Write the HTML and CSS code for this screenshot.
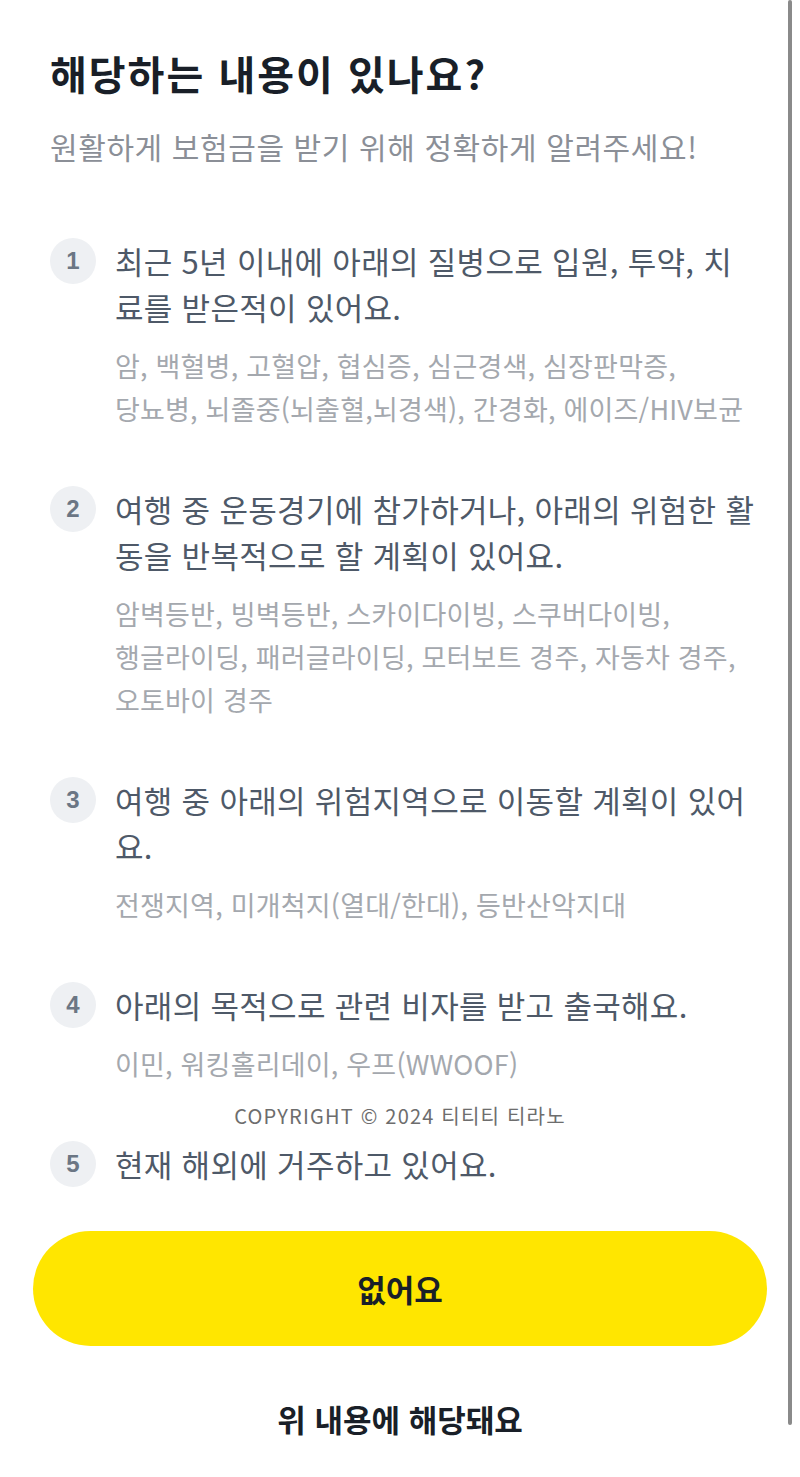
FILE: index.html
```html
<!DOCTYPE html>
<html lang="ko">
<head>
    <meta charset="UTF-8">
    <meta name="viewport" content="width=device-width, initial-scale=1.0">
    <title>해당하는 내용이 있나요?</title>
    <link rel="stylesheet" href="styles.css">
</head>
<body>
    <div class="page">
        <!-- 헤더 -->
        <h1 class="title">해당하는 내용이 있나요?</h1>
        <p class="subtitle">원활하게 보험금을 받기 위해 정확하게 알려주세요!</p>

        <!-- 질문 목록 -->
        <ol class="question-list">
            <li class="question">
                <span class="question-num">1</span>
                <div class="question-body">
                    <div class="question-text">최근 5년 이내에 아래의 질병으로 입원, 투약, 치료를 받은적이 있어요.</div>
                    <div class="question-desc">암, 백혈병, 고혈압, 협심증, 심근경색, 심장판막증, 당뇨병, 뇌졸중(뇌출혈,뇌경색), 간경화, 에이즈/HIV보균</div>
                </div>
            </li>
            <li class="question">
                <span class="question-num">2</span>
                <div class="question-body">
                    <div class="question-text">여행 중 운동경기에 참가하거나, 아래의 위험한 활동을 반복적으로 할 계획이 있어요.</div>
                    <div class="question-desc">암벽등반, 빙벽등반, 스카이다이빙, 스쿠버다이빙, 행글라이딩, 패러글라이딩, 모터보트 경주, 자동차 경주, 오토바이 경주</div>
                </div>
            </li>
            <li class="question">
                <span class="question-num">3</span>
                <div class="question-body">
                    <div class="question-text">여행 중 아래의 위험지역으로 이동할 계획이 있어요.</div>
                    <div class="question-desc">전쟁지역, 미개척지(열대/한대), 등반산악지대</div>
                </div>
            </li>
            <li class="question">
                <span class="question-num">4</span>
                <div class="question-body">
                    <div class="question-text">아래의 목적으로 관련 비자를 받고 출국해요.</div>
                    <div class="question-desc">이민, 워킹홀리데이, 우프(WWOOF)</div>
                </div>
            </li>
            <li class="question">
                <span class="question-num">5</span>
                <div class="question-body">
                    <div class="question-text">현재 해외에 거주하고 있어요.</div>
                </div>
            </li>
        </ol>

        <!-- 하단 버튼 -->
        <div class="actions">
            <button class="btn btn-primary">없어요</button>
            <button class="btn btn-text">위 내용에 해당돼요</button>
        </div>

        <!-- 워터마크 -->
        <div class="watermark">COPYRIGHT © 2024 티티티 티라노</div>
    </div>

    <div class="scrollbar"></div>
</body>
</html>
```

FILE: styles.css
```css
/* 기본 */
body {
    margin: 0;
    background: #fff;
    font-family: 'Noto Sans CJK KR', 'Noto Sans', sans-serif;
}

.page {
    position: relative;
    padding: 48px 42px 0 50px;
}

/* 헤더 */
.title {
    margin: 0;
    font-size: 40px;
    line-height: 50px;
    font-weight: 700;
    color: #191f28;
    letter-spacing: 2px;
}

.subtitle {
    margin: 28px 0 0;
    font-size: 30px;
    line-height: 40px;
    color: #8b8f97;
    letter-spacing: 0.6px;
}

/* 질문 목록 */
.question-list {
    list-style: none;
    margin: 72px 0 0;
    padding: 0;
    display: flex;
    flex-direction: column;
    gap: 56px;
}

.question {
    display: flex;
    gap: 19px;
}

.question-num {
    flex: none;
    width: 46px;
    height: 46px;
    border-radius: 50%;
    background: #eef0f3;
    color: #6b7684;
    font-family: 'Liberation Sans', sans-serif;
    font-size: 24px;
    font-weight: 700;
    display: flex;
    align-items: center;
    justify-content: center;
}

.question-body {
    flex: 1;
}

.question-text {
    font-size: 31px;
    line-height: 46px;
    color: #4e5968;
    letter-spacing: 0.3px;
}

.question-desc {
    margin-top: 14px;
    font-size: 27px;
    line-height: 43px;
    color: #a4a8ae;
    letter-spacing: 0.2px;
    word-break: keep-all;
}

/* 하단 버튼 */
.actions {
    margin: 44px -9px 0 -17px;
    display: flex;
    flex-direction: column;
    gap: 15px;
}

.btn {
    height: 115px;
    border: none;
    border-radius: 58px;
    font-family: inherit;
    font-size: 31px;
    font-weight: 700;
    color: #191f28;
    cursor: pointer;
}

.btn-primary {
    background: #ffe600;
}

.btn-text {
    background: transparent;
}

/* 워터마크 */
.watermark {
    position: absolute;
    top: 1101px;
    left: 0;
    right: 0;
    text-align: center;
    font-size: 20px;
    color: #6d6d6d;
    letter-spacing: 1.2px;
    pointer-events: none;
}

/* 스크롤바 */
.scrollbar {
    position: absolute;
    top: 0;
    left: 788px;
    width: 4px;
    height: 1425px;
    background: #8a8a8a;
    border-radius: 2px;
}
```
